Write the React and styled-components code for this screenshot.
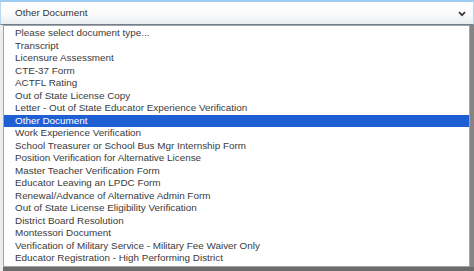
import React from "react";
import styled, { createGlobalStyle } from "styled-components";

const Global = createGlobalStyle`
  html, body { margin: 0; padding: 0; }
  body {
    background: #ededed;
    font-family: Arial, "Liberation Sans", sans-serif;
    width: 474px;
    height: 271px;
    overflow: hidden;
  }
`;

const Page = styled.div`
  display: flex;
  flex-direction: column;
  width: 474px;
`;

const Select = styled.div`
  box-sizing: border-box;
  height: 25px;
  display: flex;
  align-items: center;
  justify-content: space-between;
  padding: 0 7px 1px 14px;
  border-top: 2px solid #9fcdf1;
  border-left: 1px solid #b8d8f0;
  border-right: 1px solid #b8d8f0;
  border-bottom: 1px solid #6f7f8f;
  background: linear-gradient(#ffffff 0%, #fbfbfb 55%, #e9ecef 100%);
  color: #333;
  font-size: 9.9px;
`;

const Chevron = styled.svg`
  width: 8px;
  height: 6px;
  margin-top: 2px;
`;

const List = styled.ul`
  list-style: none;
  margin: 0 4px 0 3px;
  padding: 1px 0 0;
  box-sizing: border-box;
  height: 242px;
  background: #fff;
  border: 1px solid #a3a3a3;
  box-shadow: 4px 0 0 #858585, 0 5px 0 #6c6c6c, 4px 5px 0 #6c6c6c;
`;

const Item = styled.li`
  height: 12.5px;
  line-height: 12.5px;
  padding-left: 11px;
  font-size: 9.9px;
  white-space: nowrap;
  color: ${(p) => (p.$selected ? "#ffffff" : "#3a3a3a")};
  background: ${(p) => (p.$selected ? "#1f5fd4" : "transparent")};
`;

const items = [
  "Please select document type...",
  "Transcript",
  "Licensure Assessment",
  "CTE-37 Form",
  "ACTFL Rating",
  "Out of State License Copy",
  "Letter - Out of State Educator Experience Verification",
  "Other Document",
  "Work Experience Verification",
  "School Treasurer or School Bus Mgr Internship Form",
  "Position Verification for Alternative License",
  "Master Teacher Verification Form",
  "Educator Leaving an LPDC Form",
  "Renewal/Advance of Alternative Admin Form",
  "Out of State License Eligibility Verification",
  "District Board Resolution",
  "Montessori Document",
  "Verification of Military Service - Military Fee Waiver Only",
  "Educator Registration - High Performing District",
];

export default function App() {
  return (
    <Page>
      <Global />
      <Select>
        <span>Other Document</span>
        <Chevron viewBox="0 0 8 6">
          <path d="M1 1.2 L4 4.2 L7 1.2" fill="none" stroke="#3a3a3a" strokeWidth="1.8" />
        </Chevron>
      </Select>
      <List>
        {items.map((t) => (
          <Item key={t} $selected={t === "Other Document"}>
            {t}
          </Item>
        ))}
      </List>
    </Page>
  );
}
